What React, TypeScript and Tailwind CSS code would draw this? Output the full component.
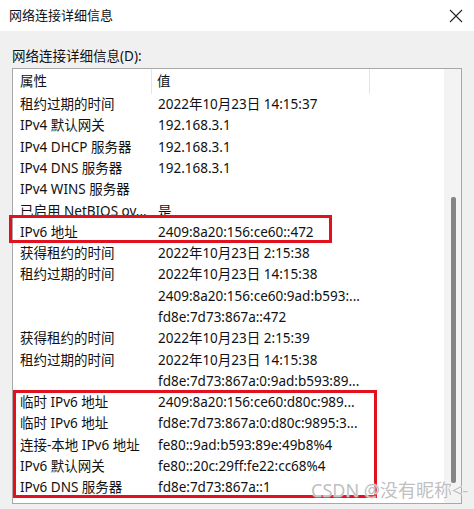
import React from 'react'

const ROWS: [string, string][] = [
  ['租约过期的时间', '2022年10月23日 14:15:37'],
  ['IPv4 默认网关', '192.168.3.1'],
  ['IPv4 DHCP 服务器', '192.168.3.1'],
  ['IPv4 DNS 服务器', '192.168.3.1'],
  ['IPv4 WINS 服务器', ''],
  ['已启用 NetBIOS ov...', '是'],
  ['IPv6 地址', '2409:8a20:156:ce60::472'],
  ['获得租约的时间', '2022年10月23日 2:15:38'],
  ['租约过期的时间', '2022年10月23日 14:15:38'],
  ['', '2409:8a20:156:ce60:9ad:b593:...'],
  ['', 'fd8e:7d73:867a::472'],
  ['获得租约的时间', '2022年10月23日 2:15:39'],
  ['租约过期的时间', '2022年10月23日 14:15:38'],
  ['', 'fd8e:7d73:867a:0:9ad:b593:89...'],
  ['临时 IPv6 地址', '2409:8a20:156:ce60:d80c:989...'],
  ['临时 IPv6 地址', 'fd8e:7d73:867a:0:d80c:9895:3...'],
  ['连接-本地 IPv6 地址', 'fe80::9ad:b593:89e:49b8%4'],
  ['IPv6 默认网关', 'fe80::20c:29ff:fe22:cc68%4'],
  ['IPv6 DNS 服务器', 'fd8e:7d73:867a::1'],
]

export default function App() {
  return (
    <div
      className="relative w-[474px] h-[509px] overflow-hidden flex flex-col bg-[#f0f0f0] text-[#111] text-[13.5px]"
      style={{ fontFamily: '"Noto Sans", "Noto Sans CJK SC", sans-serif' }}
    >
      {/* title bar */}
      <div className="h-[31px] bg-white flex items-center justify-between pl-[9px] pr-[10px] shrink-0">
        <span className="text-[13px] leading-none">网络连接详细信息</span>
        <svg width="14" height="14" viewBox="0 0 14 14" className="mr-[1px]">
          <path d="M1 1L13 13M13 1L1 13" stroke="#222" strokeWidth="1.1" fill="none" />
        </svg>
      </div>

      {/* body */}
      <div className="flex-1 flex flex-col pl-[12px] pr-[12px]">
        <div className="h-[37px] flex items-end pb-[2px] leading-none text-[13.5px]">
          <span className="pb-[3px]">网络连接详细信息(D):</span>
        </div>

        <div className="w-[450px] h-[436px] border border-[#a8a8a8] bg-white flex">
          <div className="flex-1 flex flex-col overflow-hidden">
            {/* header */}
            <div className="h-[24.5px] flex shrink-0">
              <div className="w-[139px] pl-[7px] flex items-center border-r border-[#e5e5e5]">属性</div>
              <div className="w-[218px] pl-[5px] flex items-center border-r border-[#e5e5e5]">值</div>
              <div className="flex-1" />
            </div>
            {ROWS.map(([k, v], i) => (
              <div key={i} className="h-[21.3px] flex items-center shrink-0 whitespace-nowrap">
                <div className="w-[139px] pl-[7px]">{k}</div>
                <div className="pl-[6px]">{v}</div>
              </div>
            ))}
          </div>
          {/* scrollbar */}
          <div className="w-[17px] bg-[#f3f3f3] pt-[128px] pb-[20px] flex justify-center pl-[1px]">
            <div className="w-[5px] h-full rounded-[2px] bg-[#858585]" />
          </div>
        </div>
      </div>

      {/* annotations */}
      <div className="absolute left-[9px] top-[215px] w-[323px] h-[28px] border-[3px] border-[#e3101e]" />
      <div className="absolute left-[13px] top-[390px] w-[364px] h-[108px] border-[3px] border-[#e3101e]" />
      <div className="absolute left-[311px] top-[477px] text-[18px] whitespace-nowrap text-[#c0c0c0] [text-shadow:0_0_2px_#fff,0_0_1px_#fff]">
        CSDN @没有昵称&lt;-
      </div>
    </div>
  )
}
